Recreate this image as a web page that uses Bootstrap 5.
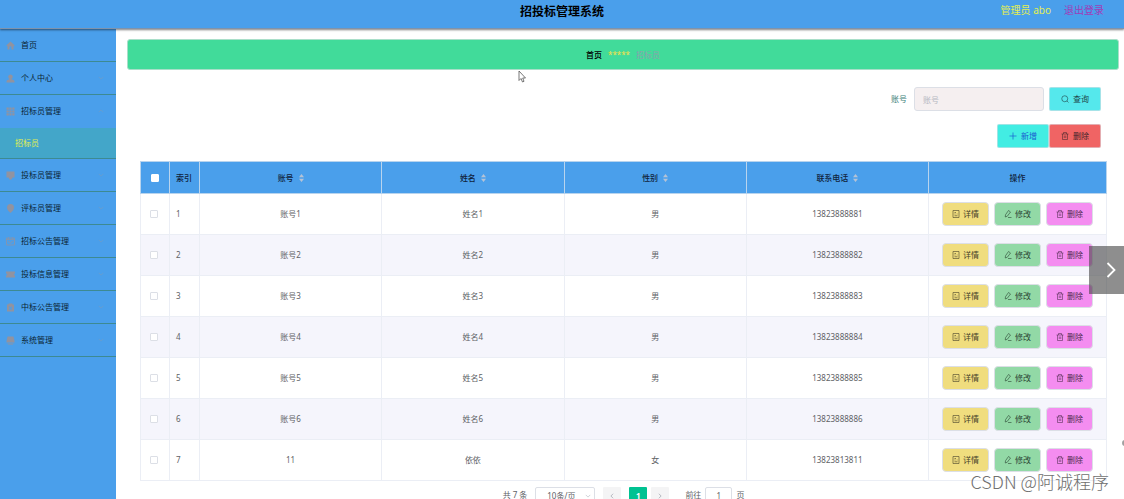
<!DOCTYPE html>
<html lang="zh-CN">
<head>
<meta charset="utf-8">
<meta name="viewport" content="width=device-width, initial-scale=1">
<title>招投标管理系统</title>
<link href="https://cdn.jsdelivr.net/npm/bootstrap@5.3.0/dist/css/bootstrap.min.css" rel="stylesheet">
<style>
  body { font-family: "Noto Sans", "Noto Sans CJK SC", sans-serif; font-size: 8px; line-height: 12px; color: #606266; }
  .app { height: 100vh; }
  .topbar { background: #4a9feb; height: 29px; border-bottom: 1px solid #7f93ab; box-shadow: 0 1px 2px rgba(0,0,0,.5); z-index: 2; }
  .topbar h1 { font-size: 12px; line-height: 23px; color: #000; }
  .account { font-size: 10px; line-height: 21px; right: 20px; top: 0; color: #e2ee52; }
  .account a { color: #a03cb8; margin-left: 13px; }
  .side { width: 116px; background: #4a9feb; }
  .side a { height: 33px; color: #0b1f33; border-bottom: 1px solid #3d8a92; padding: 0 12px 0 6px; }
  .side a.open { border-bottom-color: transparent; }
  .side a.sub { height: 31px; background: #43a6c9; color: #e2ee52; padding-left: 15px; }
  .side .ico { width: 9px; height: 9px; color: #9193a0; margin-right: 6px; }
  .side .chev { width: 6px; height: 6px; color: #6f9cc8; }
  .page { min-width: 0; padding: 10px 5px 0 11px; }
  .crumb { height: 31px; background: #41db9a; border: 1px solid #a9dfc9; border-radius: 3px; }
  .crumb a { color: #000; font-weight: 500; }
  .crumb .stars { color: #f2e04b; }
  .crumb .here { color: #8fa0ae; }
  .crumb { gap: 6px; }
  .content { padding: 17px 12px 0 13px; }
  .tools { padding-right: 6px; }
  .tools + .tools { margin-top: 13px; }
  .tools label { color: #3c8079; margin-right: 7px; }
  .tools input { width: 130px; height: 24px; border: 1px solid #dcdfe6; border-radius: 3px; background: #f5eff0; padding: 0 8px; font-size: 8px; }
  .tools input::placeholder { color: #b5b8c2; opacity: 1; }
  .find { margin-left: 5px; }
  .tool-btn { --bs-btn-font-size: 8px; --bs-btn-line-height: 12px; --bs-btn-padding-x: 0; --bs-btn-padding-y: 0; --bs-btn-border-radius: 2px; width: 52px; height: 24px; display: flex; align-items: center; justify-content: center; gap: 4px; border: 1px solid rgba(220,223,230,.6); }
  .tool-btn svg { width: 8px; height: 8px; }
  .find, .find:hover { background: #55e8ec; color: #20444a; }
  .add, .add:hover { background: #42ede3; color: #1a5fd0; }
  .del, .del:hover { background: #f06464; color: #43262a; }
  .grid-table { table-layout: fixed; font-size: 8px; color: #606266; margin: 13px 0 0; border: 1px solid #ebeef5; --bs-table-bg: transparent; }
  .grid-table > :not(caption) > * > * { padding: 0; border: 1px solid #ebeef5; vertical-align: middle; text-align: center; color: #606266; background: transparent; box-shadow: none; }
  .grid-table > thead > tr > th { height: 32px; background: #4a9feb; border-color: #b8d4ee; color: #10233c; font-weight: 500; }
  .grid-table tbody td { height: 41px; }
  .grid-table tbody tr:nth-child(even) { background: #f5f5fc; }
  .grid-table > :not(caption) > tr > :nth-child(2) { text-align: left; padding-left: 6px; }
  .c-check { width: 29px; } .c-idx { width: 30px; } .c-ops { width: 178px; }
  .tick { width: 8px; height: 8px; min-height: 0; margin: 0; border: 1px solid #dcdfe6; border-radius: 1px; background: #fff; display: block; appearance: none; }
  td .tick { margin: 0 auto 0 9px; }
  th .tick { margin: 0 auto 0 10px; border-color: #fff; }
  .sort { width: 5px; height: 8px; color: #b5c3d6; margin-left: 5px; vertical-align: -1px; }
  .row-btn { --bs-btn-font-size: 8px; --bs-btn-line-height: 12px; --bs-btn-padding-x: 0; --bs-btn-padding-y: 0; --bs-btn-border-radius: 4px; width: 47px; height: 24px; display: flex; align-items: center; justify-content: center; gap: 3px; border: 1px solid #dcdfe6; }
  .row-btn svg { width: 8px; height: 8px; }
  .ops { gap: 5px; }
  .b-view, .b-view:hover { background: #f0dd7e; color: #46422a; }
  .b-edit, .b-edit:hover { background: #92d9a6; color: #2b4634; }
  .b-del, .b-del:hover { background: #f48df0; color: #4c2a4c; }
  .pager { margin-top: 6px; line-height: 16px; }
  .pager select, .pager input { height: 17px; border: 1px solid #dcdfe6; border-radius: 2px; color: #606266; font-size: 8px; line-height: 12px; background: #fff; text-align: center; padding: 0; display: block; }
  .pager select { width: 60px; appearance: none; padding-right: 8px; }
  .pager input { width: 27px; }
  .pg { width: 18px; height: 17px; border: 0; border-radius: 1px; background: #f4f4f5; color: #b4b8c0; padding: 0; line-height: 16px; }
  .pg svg, .sel svg { width: 6px; height: 6px; display: block; margin: auto; }
  .pg.on { background: #00c292; color: #fff; font-weight: 700; }
  .sel svg { position: absolute; right: 4px; top: 6px; color: #c0c4cc; }
  .next-shot { right: 0; top: 246px; width: 35px; height: 48px; border: 0; padding: 0 0 0 8px; background: rgba(72,72,72,.62); color: #fff; z-index: 3; }
  .next-shot svg { width: 10px; height: 16px; display: block; margin: auto; }
  .credit { right: 15px; bottom: 6px; font-family: "Noto Sans CJK SC", sans-serif; font-weight: 300; font-size: 18px; line-height: 24px; color: #707070; z-index: 3; }
  .pointer { left: 518px; top: 70px; width: 8px; height: 13px; z-index: 3; }
  .knob { right: -3px; top: 440px; width: 5px; height: 6px; border-radius: 50%; background: #a0a0a0; z-index: 3; }
</style>
</head>
<body>
<svg class="d-none" aria-hidden="true">
  <symbol id="down" viewBox="0 0 8 8"><path d="M1 2.5 4 5.5 7 2.5" fill="none" stroke="currentColor"/></symbol>
  <symbol id="up" viewBox="0 0 8 8"><path d="M1 5.5 4 2.5 7 5.5" fill="none" stroke="currentColor"/></symbol>
  <symbol id="left" viewBox="0 0 8 8"><path d="M5.5 1 2.5 4 5.5 7" fill="none" stroke="currentColor" stroke-width="1.3"/></symbol>
  <symbol id="right" viewBox="0 0 8 8"><path d="M2.5 1 5.5 4 2.5 7" fill="none" stroke="currentColor" stroke-width="1.3"/></symbol>
  <symbol id="sort" viewBox="0 0 5 8"><path d="M2.5 0 5 3.3H0zM2.5 8 0 4.7h5z" fill="currentColor"/></symbol>
  <symbol id="home" viewBox="0 0 18 18"><path d="M9 1 1 8.500V10h2v7h4v-5q2-3 4 0v5h4v-7h2V8.500z" fill="currentColor"/></symbol>
  <symbol id="user" viewBox="0 0 18 18"><path d="M9 1a4.500 4.500 0 0 1 2.500 8.300V11q5.500.6 5.500 3.500V17H1v-2.500Q1 11.600 6.500 11V9.300A4.500 4.500 0 0 1 9 1z" fill="currentColor"/></symbol>
  <symbol id="menu" viewBox="0 0 18 18"><path d="M1 1h4.500v4.500H1zM6.800 1h4.400v4.500H6.800zM12.500 1H17v4.500h-4.500zM1 6.800h4.500v4.400H1zM6.800 6.800h4.400v4.400H6.800zM12.500 6.800H17v4.400h-4.500zM1 12.500h4.500V17H1zM6.800 12.500h4.400V17H6.800zM12.500 12.500H17V17h-4.500z" fill="currentColor"/></symbol>
  <symbol id="board" viewBox="0 0 18 18"><path d="M1 1h16v12h-4l-2 4H7l-2-4H1z" fill="currentColor"/></symbol>
  <symbol id="tag" viewBox="0 0 18 18"><path d="M9 0a7 7 0 0 1 7 7q0 5-7 11Q2 12 2 7a7 7 0 0 1 7-7z" fill="currentColor"/></symbol>
  <symbol id="mail" viewBox="0 0 18 18"><path d="M1 2h16v14H1zM1 5h16M4 8l5 4 5-4M5 1v3M13 1v3" fill="none" stroke="currentColor" stroke-width="1.5"/></symbol>
  <symbol id="ticket" viewBox="0 0 18 18"><path d="M0 3h18v4a2 2 0 0 0 0 4v4H0v-4a2 2 0 0 0 0-4z" fill="currentColor"/></symbol>
  <symbol id="clip" viewBox="0 0 18 18"><path fill-rule="evenodd" d="M2 3h3V1h8v2h3v14H2zM5.500 8 8 10.500 5.500 13l1.200 1.200L9 11.800l2.300 2.400 1.200-1.200-2.500-2.500L12.500 8l-1.200-1.200L9 9.200 6.700 6.800z" fill="currentColor"/></symbol>
  <symbol id="server" viewBox="0 0 18 18"><path d="M3 1h12l2 9v2H1v-2zM1 13h16v1.500H1zM4 15.500h10V17H4z" fill="currentColor"/></symbol>
  <symbol id="search" viewBox="0 0 16 16"><circle cx="7.500" cy="7.500" r="6" fill="none" stroke="currentColor" stroke-width="1.200"/><path d="m12 12 3 3" stroke="currentColor" stroke-width="1.200"/></symbol>
  <symbol id="plus" viewBox="0 0 16 16"><path d="M8 1v14M1 8h14" stroke="currentColor" stroke-width="1.400"/></symbol>
  <symbol id="trash" viewBox="0 0 16 16"><path d="M1 4h14M3 4v11h10V4M5 4V1h6v3M6.500 7v5M9.500 7v5" fill="none" stroke="currentColor" stroke-width="1.100"/></symbol>
  <symbol id="doc" viewBox="0 0 16 16"><path d="M2 1h12v14H2zM5 5h3M5 8h2M5 11.500h6M9.500 8H11" fill="none" stroke="currentColor" stroke-width="1.200"/></symbol>
  <symbol id="edit" viewBox="0 0 16 16"><path d="M3 9.500 9 1l4 3-6.500 8.500L2.500 14zM8 15h7" fill="none" stroke="currentColor" stroke-width="1.200"/></symbol>
</svg>

<div class="app d-flex flex-column overflow-hidden position-relative">
  <header class="topbar position-relative flex-shrink-0 text-center">
    <h1 class="m-0 fw-bold">招投标管理系统</h1>
    <div class="account position-absolute">管理员 abo<a href="#" class="text-decoration-none">退出登录</a></div>
  </header>
  <div class="d-flex flex-grow-1">
    <nav class="side flex-shrink-0 d-flex flex-column" aria-label="主菜单">
      <a href="#" class="d-flex align-items-center text-decoration-none"><svg class="ico"><use href="#home"/></svg>首页</a>
      <a href="#" class="d-flex align-items-center text-decoration-none"><svg class="ico"><use href="#user"/></svg>个人中心<svg class="chev ms-auto"><use href="#down"/></svg></a>
      <a href="#" class="open d-flex align-items-center text-decoration-none"><svg class="ico"><use href="#menu"/></svg>招标员管理<svg class="chev ms-auto"><use href="#up"/></svg></a>
      <a href="#" class="sub d-flex align-items-center text-decoration-none">招标员</a>
      <a href="#" class="d-flex align-items-center text-decoration-none"><svg class="ico"><use href="#board"/></svg>投标员管理<svg class="chev ms-auto"><use href="#down"/></svg></a>
      <a href="#" class="d-flex align-items-center text-decoration-none"><svg class="ico"><use href="#tag"/></svg>评标员管理<svg class="chev ms-auto"><use href="#down"/></svg></a>
      <a href="#" class="d-flex align-items-center text-decoration-none"><svg class="ico"><use href="#mail"/></svg>招标公告管理<svg class="chev ms-auto"><use href="#down"/></svg></a>
      <a href="#" class="d-flex align-items-center text-decoration-none"><svg class="ico"><use href="#ticket"/></svg>投标信息管理<svg class="chev ms-auto"><use href="#down"/></svg></a>
      <a href="#" class="d-flex align-items-center text-decoration-none"><svg class="ico"><use href="#clip"/></svg>中标公告管理<svg class="chev ms-auto"><use href="#down"/></svg></a>
      <a href="#" class="d-flex align-items-center text-decoration-none"><svg class="ico"><use href="#server"/></svg>系统管理<svg class="chev ms-auto"><use href="#down"/></svg></a>
    </nav>
    <main class="page flex-grow-1">
      <div class="crumb d-flex align-items-center justify-content-center">
        <a href="#" class="text-decoration-none">首页</a><span class="stars">*****</span><span class="here">招标员</span>
      </div>
      <div class="content">
        <form class="tools d-flex justify-content-end align-items-center">
          <label for="acc">账号</label>
          <input id="acc" type="text" placeholder="账号">
          <button type="button" class="btn tool-btn find"><svg><use href="#search"/></svg>查询</button>
        </form>
        <div class="tools d-flex justify-content-end">
          <button type="button" class="btn tool-btn add"><svg><use href="#plus"/></svg>新增</button>
          <button type="button" class="btn tool-btn del"><svg><use href="#trash"/></svg>删除</button>
        </div>
        <table class="table grid-table">
          <colgroup><col class="c-check"><col class="c-idx"><col><col><col><col><col class="c-ops"></colgroup>
          <thead><tr>
            <th><input type="checkbox" class="tick" aria-label="全选"></th><th>索引</th>
            <th>账号<svg class="sort"><use href="#sort"/></svg></th>
            <th>姓名<svg class="sort"><use href="#sort"/></svg></th>
            <th>性别<svg class="sort"><use href="#sort"/></svg></th>
            <th>联系电话<svg class="sort"><use href="#sort"/></svg></th>
            <th>操作</th>
          </tr></thead>
          <tbody>
            <tr><td><input type="checkbox" class="tick" aria-label="选择 1"></td><td>1</td><td>账号1</td><td>姓名1</td><td>男</td><td>13823888881</td><td><div class="ops d-flex justify-content-center"><button type="button" class="btn row-btn b-view"><svg><use href="#doc"/></svg>详情</button><button type="button" class="btn row-btn b-edit"><svg><use href="#edit"/></svg>修改</button><button type="button" class="btn row-btn b-del"><svg><use href="#trash"/></svg>删除</button></div></td></tr>
            <tr><td><input type="checkbox" class="tick" aria-label="选择 2"></td><td>2</td><td>账号2</td><td>姓名2</td><td>男</td><td>13823888882</td><td><div class="ops d-flex justify-content-center"><button type="button" class="btn row-btn b-view"><svg><use href="#doc"/></svg>详情</button><button type="button" class="btn row-btn b-edit"><svg><use href="#edit"/></svg>修改</button><button type="button" class="btn row-btn b-del"><svg><use href="#trash"/></svg>删除</button></div></td></tr>
            <tr><td><input type="checkbox" class="tick" aria-label="选择 3"></td><td>3</td><td>账号3</td><td>姓名3</td><td>男</td><td>13823888883</td><td><div class="ops d-flex justify-content-center"><button type="button" class="btn row-btn b-view"><svg><use href="#doc"/></svg>详情</button><button type="button" class="btn row-btn b-edit"><svg><use href="#edit"/></svg>修改</button><button type="button" class="btn row-btn b-del"><svg><use href="#trash"/></svg>删除</button></div></td></tr>
            <tr><td><input type="checkbox" class="tick" aria-label="选择 4"></td><td>4</td><td>账号4</td><td>姓名4</td><td>男</td><td>13823888884</td><td><div class="ops d-flex justify-content-center"><button type="button" class="btn row-btn b-view"><svg><use href="#doc"/></svg>详情</button><button type="button" class="btn row-btn b-edit"><svg><use href="#edit"/></svg>修改</button><button type="button" class="btn row-btn b-del"><svg><use href="#trash"/></svg>删除</button></div></td></tr>
            <tr><td><input type="checkbox" class="tick" aria-label="选择 5"></td><td>5</td><td>账号5</td><td>姓名5</td><td>男</td><td>13823888885</td><td><div class="ops d-flex justify-content-center"><button type="button" class="btn row-btn b-view"><svg><use href="#doc"/></svg>详情</button><button type="button" class="btn row-btn b-edit"><svg><use href="#edit"/></svg>修改</button><button type="button" class="btn row-btn b-del"><svg><use href="#trash"/></svg>删除</button></div></td></tr>
            <tr><td><input type="checkbox" class="tick" aria-label="选择 6"></td><td>6</td><td>账号6</td><td>姓名6</td><td>男</td><td>13823888886</td><td><div class="ops d-flex justify-content-center"><button type="button" class="btn row-btn b-view"><svg><use href="#doc"/></svg>详情</button><button type="button" class="btn row-btn b-edit"><svg><use href="#edit"/></svg>修改</button><button type="button" class="btn row-btn b-del"><svg><use href="#trash"/></svg>删除</button></div></td></tr>
            <tr><td><input type="checkbox" class="tick" aria-label="选择 7"></td><td>7</td><td>11</td><td>依依</td><td>女</td><td>13823813811</td><td><div class="ops d-flex justify-content-center"><button type="button" class="btn row-btn b-view"><svg><use href="#doc"/></svg>详情</button><button type="button" class="btn row-btn b-edit"><svg><use href="#edit"/></svg>修改</button><button type="button" class="btn row-btn b-del"><svg><use href="#trash"/></svg>删除</button></div></td></tr>
          </tbody>
        </table>
        <div class="pager d-flex justify-content-center">
          <span class="me-2">共 7 条</span>
          <span class="sel position-relative"><select aria-label="每页条数"><option>10条/页</option></select><svg><use href="#down"/></svg></span>
          <button type="button" class="pg ms-2 me-1 ms-auto-0" aria-label="上一页"><svg><use href="#left"/></svg></button>
          <button type="button" class="pg on mx-1">1</button>
          <button type="button" class="pg me-3" aria-label="下一页"><svg><use href="#right"/></svg></button>
          <label for="go">前往</label>
          <input id="go" type="text" value="1" class="mx-1"><span>页</span>
        </div>
      </div>
    </main>
  </div>
  <button type="button" class="next-shot position-absolute" aria-label="下一张"><svg viewBox="0 0 10 16"><path d="M1.500 1 8.500 8 1.500 15" fill="none" stroke="currentColor" stroke-width="1.800"/></svg></button>
  <svg class="pointer position-absolute" viewBox="0 0 8 13"><path d="M1 1v9.500l2-2L4.500 12l1.500-.7L4.700 8H7.500z" fill="#fff" stroke="#555" stroke-width=".8"/></svg>
  <span class="knob position-absolute"></span>
  <div class="credit position-absolute">CSDN @阿诚程序</div>
</div>
<script src="https://cdn.jsdelivr.net/npm/bootstrap@5.3.0/dist/js/bootstrap.bundle.min.js"></script>
</body>
</html>
